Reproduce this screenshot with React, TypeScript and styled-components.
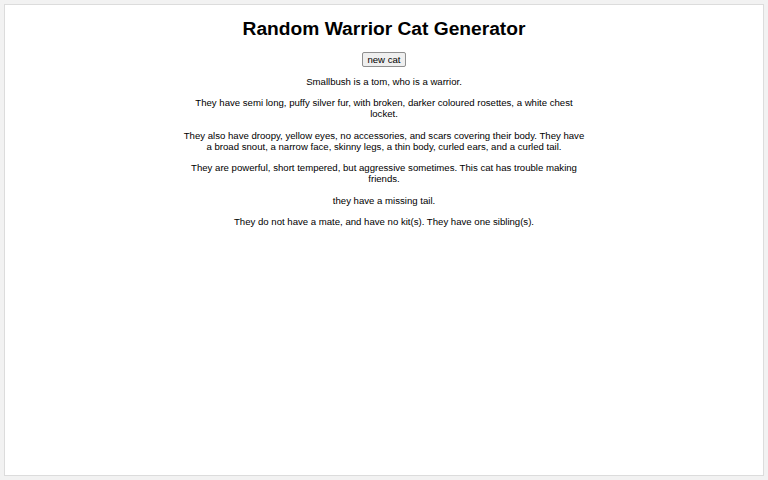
import React from 'react'
import styled, { createGlobalStyle } from 'styled-components'

const GlobalStyle = createGlobalStyle`
  html, body {
    margin: 0;
    padding: 0;
    background-color: #f2f2f2;
    font-family: "Liberation Sans", Arial, sans-serif;
  }
`

const cat = {
  name: 'Smallbush',
  lines: [
    'Smallbush is a tom, who is a warrior.',
    'They have semi long, puffy silver fur, with broken, darker coloured rosettes, a white chest locket.',
    'They also have droopy, yellow eyes, no accessories, and scars covering their body. They have a broad snout, a narrow face, skinny legs, a thin body, curled ears, and a curled tail.',
    'They are powerful, short tempered, but aggressive sometimes. This cat has trouble making friends.',
    'they have a missing tail.',
    'They do not have a mate, and have no kit(s). They have one sibling(s).',
  ],
}

const App = () => {
  return (
    <>
      <GlobalStyle />
      <Page>
        <Card>
          <Title>Random Warrior Cat Generator</Title>
          <NewCatButton type="button">new cat</NewCatButton>
          <Description>
            {cat.lines.map(line => (
              <Line key={line}>{line}</Line>
            ))}
          </Description>
        </Card>
      </Page>
    </>
  )
}

export default App

const Page = styled.div`
  height: 480px;
  padding: 4px;
  box-sizing: border-box;
  display: flex;
`

const Card = styled.main`
  flex: 1;
  display: flex;
  flex-direction: column;
  align-items: center;
  background-color: #fff;
  border: 1px solid #dcdcdc;
`

const Title = styled.h1`
  margin: 13px 0 0;
  font-size: 19.2px;
  font-weight: 700;
  color: #000;
`

const NewCatButton = styled.button`
  margin-top: 12px;
  padding: 1px 4px;
  font-family: "Liberation Sans", Arial, sans-serif;
  font-size: 9.6px;
  color: #000;
  background-color: #efefef;
  border: 1px solid #8f8f8f;
  border-radius: 2px;
`

const Description = styled.section`
  width: 404px;
  margin-top: 9px;
  text-align: center;
  font-size: 9.6px;
  color: #000;
`

const Line = styled.p`
  margin: 0 0 10.4px;
  line-height: 11px;
`
